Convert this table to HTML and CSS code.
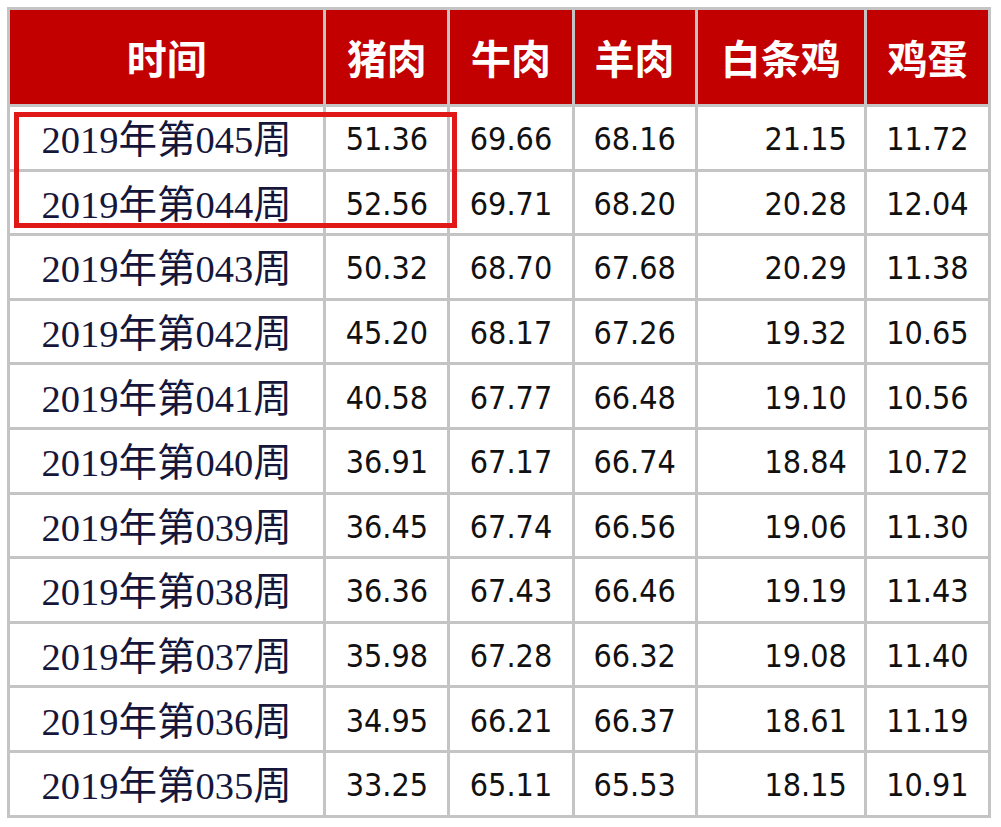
FILE: index.html
```html
<!DOCTYPE html>
<html lang="zh">
<head>
<meta charset="utf-8">
<title>价格表</title>
<link rel="stylesheet" href="styles.css">
</head>
<body>
<div class="wrap">
  <table class="grid">
    <colgroup>
      <col class="c-time"><col class="c-num"><col class="c-num"><col class="c-num4"><col class="c-wide"><col class="c-num">
    </colgroup>
    <thead>
      <tr><th>时间</th><th>猪肉</th><th>牛肉</th><th>羊肉</th><th>白条鸡</th><th>鸡蛋</th></tr>
    </thead>
    <tbody>
      <tr><td class="t">2019年第045周</td><td>51.36</td><td>69.66</td><td>68.16</td><td class="r">21.15</td><td>11.72</td></tr>
      <tr><td class="t">2019年第044周</td><td>52.56</td><td>69.71</td><td>68.20</td><td class="r">20.28</td><td>12.04</td></tr>
      <tr><td class="t">2019年第043周</td><td>50.32</td><td>68.70</td><td>67.68</td><td class="r">20.29</td><td>11.38</td></tr>
      <tr><td class="t">2019年第042周</td><td>45.20</td><td>68.17</td><td>67.26</td><td class="r">19.32</td><td>10.65</td></tr>
      <tr><td class="t">2019年第041周</td><td>40.58</td><td>67.77</td><td>66.48</td><td class="r">19.10</td><td>10.56</td></tr>
      <tr><td class="t">2019年第040周</td><td>36.91</td><td>67.17</td><td>66.74</td><td class="r">18.84</td><td>10.72</td></tr>
      <tr><td class="t">2019年第039周</td><td>36.45</td><td>67.74</td><td>66.56</td><td class="r">19.06</td><td>11.30</td></tr>
      <tr><td class="t">2019年第038周</td><td>36.36</td><td>67.43</td><td>66.46</td><td class="r">19.19</td><td>11.43</td></tr>
      <tr><td class="t">2019年第037周</td><td>35.98</td><td>67.28</td><td>66.32</td><td class="r">19.08</td><td>11.40</td></tr>
      <tr><td class="t">2019年第036周</td><td>34.95</td><td>66.21</td><td>66.37</td><td class="r">18.61</td><td>11.19</td></tr>
      <tr><td class="t">2019年第035周</td><td>33.25</td><td>65.11</td><td>65.53</td><td class="r">18.15</td><td>10.91</td></tr>
    </tbody>
  </table>
  <div class="highlight"></div>
</div>
</body>
</html>
```

FILE: styles.css
```css
html, body {
  margin: 0;
  padding: 0;
  background: #ffffff;
}
body {
  padding: 7px;
}
.wrap {
  position: relative;
  width: 984px;
}
.grid {
  table-layout: fixed;
  width: 984px;
  border-collapse: separate;
  border-spacing: 3px;
  background: #c4c4c4;
}
.c-time { width: 313px; }
.c-num { width: 121px; }
.c-num4 { width: 120px; }
.c-wide { width: 166px; }
.grid th {
  height: 94px;
  padding: 0;
  background: #c20000;
  color: #ffffff;
  font-family: "Noto Sans CJK SC", sans-serif;
  font-weight: 700;
  font-size: 40px;
  text-align: center;
  vertical-align: middle;
}
.grid td {
  height: 61.6px;
  padding: 3px 0 0 0;
  box-sizing: border-box;
  background: #ffffff;
  color: #111111;
  font-family: "DejaVu Sans Condensed", "DejaVu Sans", sans-serif;
  font-size: 32px;
  text-align: center;
  vertical-align: middle;
  white-space: nowrap;
}
.grid td.t {
  padding: 0 0 3px 0;
  font-family: "Liberation Serif", "Noto Sans CJK SC", serif;
  font-size: 38.5px;
  color: #15163a;
}
.grid td.r {
  text-align: right;
  padding-right: 17px;
}
.highlight {
  position: absolute;
  left: 7px;
  top: 105px;
  width: 443px;
  height: 116px;
  box-sizing: border-box;
  border: 5px solid #e01818;
}
```
